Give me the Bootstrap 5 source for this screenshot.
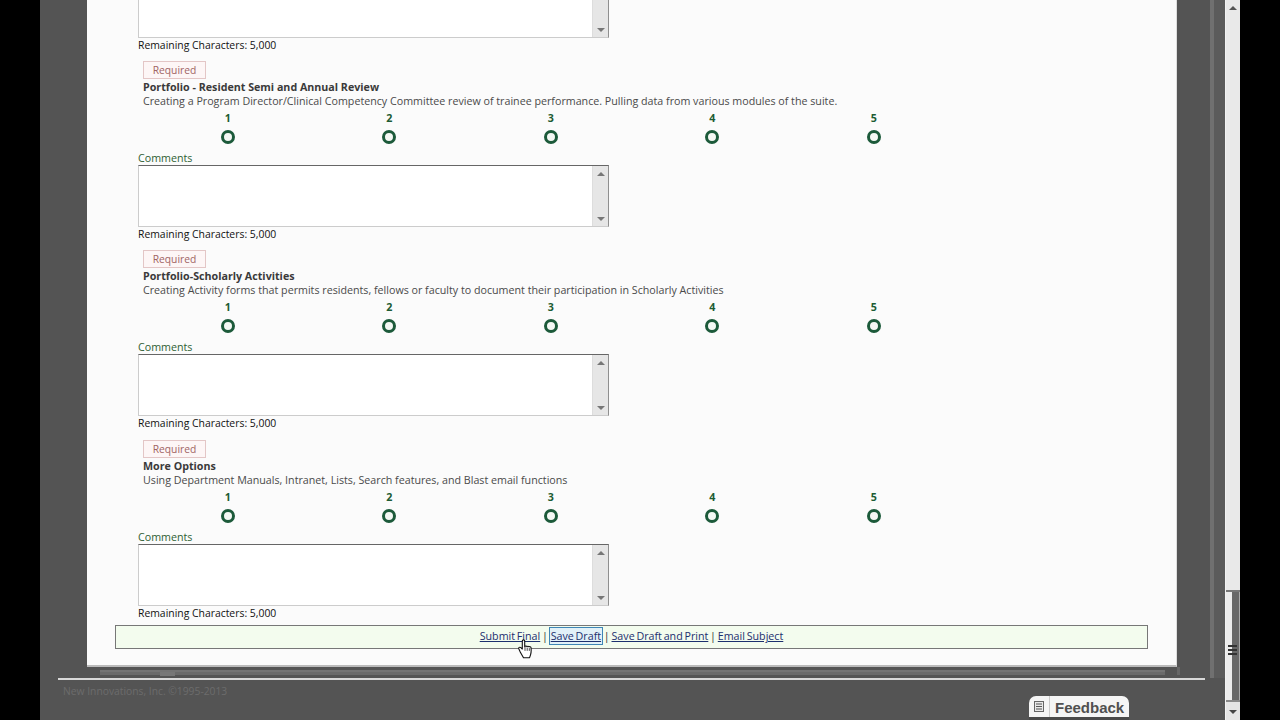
<!DOCTYPE html>
<html lang="en">
<head>
<meta charset="utf-8">
<title>Evaluation form</title>
<link href="https://cdn.jsdelivr.net/npm/bootstrap@5.3.0/dist/css/bootstrap.min.css" rel="stylesheet">
<style>
html,body{margin:0;height:720px;overflow:hidden;background:#000}
body{font-family:"Open Sans","Noto Sans",sans-serif;font-size:10.7px;line-height:14px;color:#333}
.stage{position:relative;width:1200px;height:720px;margin-left:40px;background:#545454}
.work{width:1185px}
.upper{height:678px}
.panel-wrap{width:1140px;padding-left:47px;height:678px}
.sheet{width:1090px;height:667px;background:#fbfbfb;border-bottom:2px solid #bbb;padding-left:28px;border-right:1px solid #ddd}
.hbar-row{margin-top:3px;height:5px}
.hbar{margin-left:13px;width:1065px;height:5px;background:#6a6a6a;border-top:2px solid #747474}
.hbar-handle{width:15px;height:4px;margin-left:60px;background:#777}
.hbar-end{width:3px;height:8px;margin:-3px 0 0 12px;background:#666}
.strip-a{width:30px;flex:none}
.strip-b{width:4px;background:#707070;flex:none}
.strip-c{width:11px;background:#5b5b5b;flex:none}
.rule{height:2px;background:#d8d8d8;margin-left:18px;width:1147px}
.form-col{padding-left:23px;width:494px}
.tbox{display:flex;width:471px;background:#fff;border:1px solid #ccc;border-top-color:#666;border-right-color:#8f8f8f}
.tbox textarea{flex:1 1 auto;border:0;outline:0;resize:none;background:#fff;min-width:0;padding:0}
.h-first{height:38px;border-top:0}
.h-first textarea,.h-first .tscroll{height:37px}
.h-norm textarea,.h-norm .tscroll{height:60px}
.tscroll{width:16px;background:#e6e6e6;border-left:1px solid #ddd;flex:none;padding:6px 0 5px}
.tscroll i{display:block;width:0;height:0;margin:0 auto;border-left:4px solid transparent;border-right:4px solid transparent}
.tscroll .up{border-bottom:4px solid #777}
.tscroll .dn{border-top:4px solid #777}
.remain{color:#111;height:14px;font-size:10.4px}
.item{padding-top:9px;height:189.4px}
.req{width:63px;height:18px;margin-left:5px;border:1px solid #e3c6c6;background:#fdf6f6;color:#a06464;text-align:center;line-height:16px;font-size:10.3px}
.ttl{margin-left:5px;font-weight:700;color:#3a3a3a;margin-top:1px}
.dsc{margin-left:5px;color:#4a4a4a}
.opts{width:808px;margin-left:9px;margin-top:3px;color:#1d5b33;font-weight:700}
.opt{width:161.5px;text-align:center}
.ring{display:block;width:14px;height:14px;margin:5px auto 0;border:3px solid #1c5a3a;border-radius:50%;background:#f4f8f4}
.cmt{color:#2f5f33;margin-top:7px;height:14px}
.actions{width:1033px;height:24px;margin-top:5px;background:#f3fcee;border:1px solid #777;color:#333;line-height:21px;word-spacing:-1px}
.actions a{color:#1c2f6e}
.actions a.focused{background:#e2f1f8;outline:1px solid #3f86b6;padding:1px 1px}
.foot{color:#6c6c6c;font-size:10.3px;padding:4px 0 0 23px}
.vbar{width:15px;background:#e9e9e9;border-left:1px solid #f2f2f2}
.vbar i{display:block;width:0;height:0;border-left:4px solid transparent;border-right:4px solid transparent}
.vup{height:16px;padding-top:6px}
.vup i{border-bottom:4px solid #555}
.vdn{height:18px;padding-top:8px;background:#e4e4e4}
.vdn i{border-top:4px solid #444}
.vthumb{height:112px;background:linear-gradient(to right,#ececec 0,#ececec 45%,#686868 45%,#686868 92%,#aaa 92%);border-top:2px solid #777;border-bottom:2px solid #888}
.grip{width:9px;height:2px;margin-left:2px;background:#333;box-shadow:0 4px 0 #333,0 8px 0 #333}
.vtrack{height:574px}
.fb{position:absolute;left:989px;top:696px;width:100px;height:24px;background:#f5f5f5;border-radius:7px 7px 0 0;border-bottom:3px solid #4a4a4a;font-family:"Liberation Sans",sans-serif;font-weight:700;font-size:15px;color:#505050}
.fb-ico{width:21px;height:21px;border-right:1px solid #ccc;flex:none}
.fb-txt{padding-left:5px;line-height:23px}
.hand{position:absolute;left:478px;top:639px}
</style>
</head>
<body>
<div class="stage d-flex">
  <div class="work flex-shrink-0">
    <div class="upper d-flex">
      <div class="panel-wrap flex-shrink-0">
        <div class="sheet">
          <div class="form-col">
            <div class="tbox h-first"><textarea aria-label="Comments"></textarea><div class="tscroll d-flex flex-column justify-content-end"><i class="dn"></i></div></div>
            <div class="remain">Remaining Characters: 5,000</div>
          </div>

          <div class="form-col item">
            <div class="req">Required</div>
            <div class="ttl">Portfolio - Resident Semi and Annual Review</div>
            <div class="dsc text-nowrap">Creating a Program Director/Clinical Competency Committee review of trainee performance. Pulling data from various modules of the suite.</div>
            <div class="opts d-flex">
              <div class="opt">1<span class="ring"></span></div><div class="opt">2<span class="ring"></span></div><div class="opt">3<span class="ring"></span></div><div class="opt">4<span class="ring"></span></div><div class="opt">5<span class="ring"></span></div>
            </div>
            <div class="cmt">Comments</div>
            <div class="tbox h-norm"><textarea aria-label="Comments"></textarea><div class="tscroll d-flex flex-column justify-content-between"><i class="up"></i><i class="dn"></i></div></div>
            <div class="remain">Remaining Characters: 5,000</div>
          </div>

          <div class="form-col item">
            <div class="req">Required</div>
            <div class="ttl">Portfolio-Scholarly Activities</div>
            <div class="dsc text-nowrap">Creating Activity forms that permits residents, fellows or faculty to document their participation in Scholarly Activities</div>
            <div class="opts d-flex">
              <div class="opt">1<span class="ring"></span></div><div class="opt">2<span class="ring"></span></div><div class="opt">3<span class="ring"></span></div><div class="opt">4<span class="ring"></span></div><div class="opt">5<span class="ring"></span></div>
            </div>
            <div class="cmt">Comments</div>
            <div class="tbox h-norm"><textarea aria-label="Comments"></textarea><div class="tscroll d-flex flex-column justify-content-between"><i class="up"></i><i class="dn"></i></div></div>
            <div class="remain">Remaining Characters: 5,000</div>
          </div>

          <div class="form-col item">
            <div class="req">Required</div>
            <div class="ttl">More Options</div>
            <div class="dsc text-nowrap">Using Department Manuals, Intranet, Lists, Search features, and Blast email functions</div>
            <div class="opts d-flex">
              <div class="opt">1<span class="ring"></span></div><div class="opt">2<span class="ring"></span></div><div class="opt">3<span class="ring"></span></div><div class="opt">4<span class="ring"></span></div><div class="opt">5<span class="ring"></span></div>
            </div>
            <div class="cmt">Comments</div>
            <div class="tbox h-norm"><textarea aria-label="Comments"></textarea><div class="tscroll d-flex flex-column justify-content-between"><i class="up"></i><i class="dn"></i></div></div>
            <div class="remain">Remaining Characters: 5,000</div>
          </div>

          <div class="actions text-center">
            <a href="#">Submit Final</a> | <a href="#" class="focused">Save Draft</a> | <a href="#">Save Draft and Print</a> | <a href="#">Email Subject</a>
          </div>
        </div>
        <div class="hbar-row d-flex">
          <div class="hbar"><div class="hbar-handle"></div></div>
          <div class="hbar-end"></div>
        </div>
      </div>
      <div class="strip-a"></div><div class="strip-b"></div><div class="strip-c"></div>
    </div>
    <div class="rule"></div>
    <div class="foot">New Innovations, Inc. ©1995-2013</div>
  </div>
  <div class="vbar flex-shrink-0 d-flex flex-column">
    <div class="vup d-flex justify-content-center"><i></i></div>
    <div class="vtrack"></div>
    <div class="vthumb d-flex align-items-center"><div class="grip"></div></div>
    <div class="vdn d-flex justify-content-center"><i></i></div>
  </div>
  <svg class="hand" width="16" height="21" viewBox="0 0 16 23" preserveAspectRatio="none" aria-hidden="true"><path d="M4.500 1.500c1-1 2.200-.5 2.200.8v6.200c.4-1.200 2-1.200 2.200 0 .5-1 1.900-.9 2.100.3.6-.8 1.900-.5 2 .6.3 2.500.3 5-.4 7.600l-1 3.500H5.500l-3-5.600L.8 10.700c-.5-1.400 1-2.300 2.100-1.200l1.400 1.500V2.300z" fill="#fff" stroke="#111" stroke-width="1.100" stroke-linejoin="round"/><path d="M7 9v4M9.200 9.500V13M11.300 10v3" stroke="#111" stroke-width=".8" fill="none"/></svg>
  <div class="fb d-flex align-items-start">
    <div class="fb-ico d-flex align-items-center justify-content-center">
      <svg width="10" height="11" viewBox="0 0 10 11" aria-hidden="true"><rect x=".5" y=".5" width="9" height="10" fill="#e8e8e8" stroke="#666"/><path d="M2 3h6M2 5.500h6M2 8h6" stroke="#555"/></svg>
    </div>
    <span class="fb-txt">Feedback</span>
  </div>
</div>
</body>
</html>
